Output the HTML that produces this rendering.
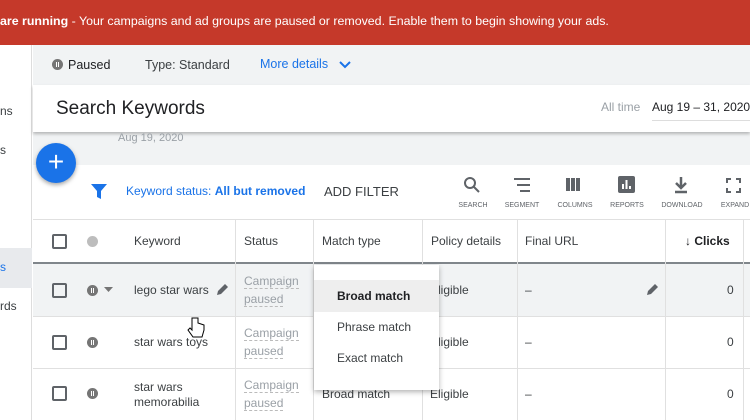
<!DOCTYPE html><html><head><style>
*{margin:0;padding:0;box-sizing:border-box}
body{width:750px;height:420px;overflow:hidden;position:relative;font-family:"Liberation Sans",sans-serif;background:#fff;color:#3c4043}
.a{position:absolute;white-space:nowrap}
.vl{position:absolute;width:1px;background:#e0e0e0}
.cb{position:absolute;width:15px;height:15px;border:2px solid #5f6368;border-radius:2px}
.pd{position:absolute;width:11px;height:11px;border-radius:50%;background:#757575}
.pd:after{content:"";position:absolute;left:4px;top:3px;width:3px;height:5px;border-left:1px solid #fff;border-right:1px solid #fff;box-sizing:border-box}
.cp{color:#9aa0a6;font-size:12px;line-height:18px;position:absolute}
.cp span{border-bottom:1px dashed #bbb}
.tl{position:absolute;font-size:7px;color:#5f6368;text-align:center;width:50px}
</style></head><body>
<div class="a" style="left:0;top:0;width:750px;height:45px;background:#c5392a"></div>
<div class="a" style="left:0;top:14px;color:#fff;font-size:12.4px"><b>are running</b> - Your campaigns and ad groups are paused or removed. Enable them to begin showing your ads.</div>
<div class="a" style="left:0;top:45px;width:32px;height:375px;background:#fff;border-right:1px solid #ddd"></div>
<div class="a" style="left:0;top:248px;width:32px;height:40px;background:#e8eaed"></div>
<div class="a" style="left:0;top:104px;font-size:12px">ns</div>
<div class="a" style="left:0;top:143px;font-size:12px">s</div>
<div class="a" style="left:0;top:260px;font-size:12px;color:#1a73e8">s</div>
<div class="a" style="left:0;top:299px;font-size:12px">rds</div>
<div class="a" style="left:33px;top:45px;width:717px;height:120px;background:#f1f3f4"></div>
<div class="pd" style="left:52px;top:59px"></div>
<div class="a" style="left:68px;top:58px;font-size:12.5px;color:#202124">Paused</div>
<div class="a" style="left:145px;top:58px;font-size:12.5px">Type: Standard</div>
<div class="a" style="left:260px;top:57px;font-size:12.5px;color:#1a73e8">More details</div>
<svg class="a" style="left:338px;top:59px" width="14" height="12"><path d="M2 3l5 5 5-5" stroke="#1a73e8" stroke-width="2" fill="none"/></svg>
<div class="a" style="left:33px;top:85px;width:717px;height:47px;background:#fff;box-shadow:0 2px 3px rgba(0,0,0,.25)"></div>
<div class="a" style="left:56px;top:98px;font-size:19px;color:#202124">Search Keywords</div>
<div class="a" style="left:601px;top:100px;font-size:12px;color:#9aa0a6">All time</div>
<div class="a" style="left:652px;top:100px;font-size:12px;color:#202124">Aug 19 – 31, 2020</div>
<div class="a" style="left:652px;top:120px;width:98px;height:1px;background:#ddd"></div>
<div class="a" style="left:118px;top:132px;font-size:11px;color:#9aa0a6">Aug 19, 2020</div>
<div class="a" style="left:33px;top:165px;width:717px;height:255px;background:#fff"></div>
<div class="a" style="left:36px;top:143px;width:40px;height:40px;border-radius:50%;background:#1a73e8;box-shadow:0 2px 4px rgba(0,0,0,.35);color:#fff;font-size:28px;line-height:38px;text-align:center">+</div>
<svg class="a" style="left:90px;top:183px" width="18" height="17"><path d="M1 1h16l-6 7v8l-4-2v-6z" fill="#1a73e8"/></svg>
<div class="a" style="left:126px;top:184px;font-size:12px;color:#1a73e8">Keyword status: <b>All but removed</b></div>
<div class="a" style="left:324px;top:184px;font-size:13px;color:#3c4043">ADD FILTER</div>
<svg class="a" style="left:463px;top:176px" width="18" height="18"><circle cx="7" cy="7" r="5" stroke="#5f6368" stroke-width="2" fill="none"/><path d="M11 11l5 5" stroke="#5f6368" stroke-width="2"/></svg>
<svg class="a" style="left:513px;top:177px" width="18" height="16"><path d="M1 2h16M4 8h13M7 14h10" stroke="#5f6368" stroke-width="2"/></svg>
<svg class="a" style="left:566px;top:177px" width="18" height="15"><path d="M2 1v13M7 1v13M12 1v13" stroke="#5f6368" stroke-width="4"/></svg>
<svg class="a" style="left:618px;top:176px" width="17" height="17"><rect width="17" height="17" rx="2" fill="#5f6368"/><path d="M5 13V8M8.5 13V4M12 13V10" stroke="#fff" stroke-width="2"/></svg>
<svg class="a" style="left:673px;top:176px" width="16" height="18"><path d="M8 1v10M3 7l5 5 5-5M2 16h12" stroke="#5f6368" stroke-width="2.5" fill="none"/></svg>
<svg class="a" style="left:726px;top:178px" width="15" height="15"><path d="M1 5V1h4M10 1h4v4M14 10v4h-4M5 14H1v-4" stroke="#5f6368" stroke-width="2" fill="none"/></svg>
<div class="tl" style="left:448px;top:202px">SEARCH</div>
<div class="tl" style="left:497px;top:202px">SEGMENT</div>
<div class="tl" style="left:550px;top:202px">COLUMNS</div>
<div class="tl" style="left:602px;top:202px">REPORTS</div>
<div class="tl" style="left:657px;top:202px">DOWNLOAD</div>
<div class="tl" style="left:710px;top:202px">EXPAND</div>
<div class="a" style="left:33px;top:219px;width:717px;height:1px;background:#e0e0e0"></div>
<div class="a" style="left:33px;top:262px;width:717px;height:2px;background:#80868b"></div>
<div class="a" style="left:33px;top:264px;width:717px;height:52px;background:#f1f3f4"></div>
<div class="a" style="left:33px;top:316px;width:717px;height:1px;background:#e0e0e0"></div>
<div class="a" style="left:33px;top:368px;width:717px;height:1px;background:#e0e0e0"></div>
<div class="vl" style="left:235px;top:220px;height:200px"></div>
<div class="vl" style="left:313px;top:220px;height:200px"></div>
<div class="vl" style="left:422px;top:220px;height:200px"></div>
<div class="vl" style="left:517px;top:220px;height:200px"></div>
<div class="vl" style="left:665px;top:220px;height:200px"></div>
<div class="vl" style="left:743px;top:220px;height:200px"></div>
<div class="cb" style="left:52px;top:234px"></div>
<div class="a" style="left:87px;top:236px;width:11px;height:11px;border-radius:50%;background:#bdbdbd"></div>
<div class="a" style="left:134px;top:234px;font-size:12px">Keyword</div>
<div class="a" style="left:244px;top:234px;font-size:12px">Status</div>
<div class="a" style="left:322px;top:234px;font-size:12px">Match type</div>
<div class="a" style="left:431px;top:234px;font-size:12px">Policy details</div>
<div class="a" style="left:525px;top:234px;font-size:12px">Final URL</div>
<div class="a" style="left:685px;top:234px;font-size:12px;color:#202124">↓ <b>Clicks</b></div>
<div class="cb" style="left:52px;top:283px"></div><div class="pd" style="left:87px;top:285px"></div>
<svg class="a" style="left:104px;top:287px" width="9" height="6"><path d="M0 0h9L4.5 5z" fill="#757575"/></svg>
<div class="a" style="left:134px;top:283px;font-size:12px">lego star wars</div>
<svg class="a" style="left:215px;top:282px" width="15" height="15"><path d="M2 13l1-4 7-7 3 3-7 7z" fill="#5f6368"/></svg>
<svg class="a" style="left:645px;top:282px" width="15" height="15"><path d="M2 13l1-4 7-7 3 3-7 7z" fill="#5f6368"/></svg>
<div class="cp" style="left:244px;top:272px"><span>Campaign</span><br><span>paused</span></div>
<div class="a" style="left:430px;top:283px;font-size:12px">Eligible</div>
<div class="a" style="left:525px;top:283px;font-size:12px">–</div>
<div class="a" style="left:727px;top:283px;font-size:12px">0</div>
<div class="cb" style="left:52px;top:335px"></div><div class="pd" style="left:87px;top:337px"></div>
<div class="a" style="left:134px;top:335px;font-size:12px">star wars toys</div>
<div class="cp" style="left:244px;top:324px"><span>Campaign</span><br><span>paused</span></div>
<div class="a" style="left:430px;top:335px;font-size:12px">Eligible</div>
<div class="a" style="left:525px;top:335px;font-size:12px">–</div>
<div class="a" style="left:727px;top:335px;font-size:12px">0</div>
<div class="cb" style="left:52px;top:386px"></div><div class="pd" style="left:87px;top:388px"></div>
<div class="a" style="left:134px;top:380px;font-size:12px;line-height:15px">star wars<br>memorabilia</div>
<div class="cp" style="left:244px;top:376px"><span>Campaign</span><br><span>paused</span></div>
<div class="a" style="left:322px;top:387px;font-size:12px">Broad match</div>
<div class="a" style="left:430px;top:387px;font-size:12px">Eligible</div>
<div class="a" style="left:525px;top:387px;font-size:12px">–</div>
<div class="a" style="left:727px;top:387px;font-size:12px">0</div>
<div class="a" style="left:314px;top:265px;width:125px;height:125px;background:#fff;box-shadow:0 2px 5px rgba(0,0,0,.3)"></div>
<div class="a" style="left:314px;top:280px;width:125px;height:32px;background:#eeeeee"></div>
<div class="a" style="left:337px;top:289px;font-size:12px;color:#202124;font-weight:bold">Broad match</div>
<div class="a" style="left:337px;top:320px;font-size:12px">Phrase match</div>
<div class="a" style="left:337px;top:351px;font-size:12px">Exact match</div>
<svg class="a" style="left:187px;top:316px" width="18" height="24"><path d="M5 2v12l-2-2-2 2 5 7h9l2-7v-5l-3-1-3-1V2z" fill="#fff" stroke="#000" stroke-width="1"/></svg>
</body></html>
